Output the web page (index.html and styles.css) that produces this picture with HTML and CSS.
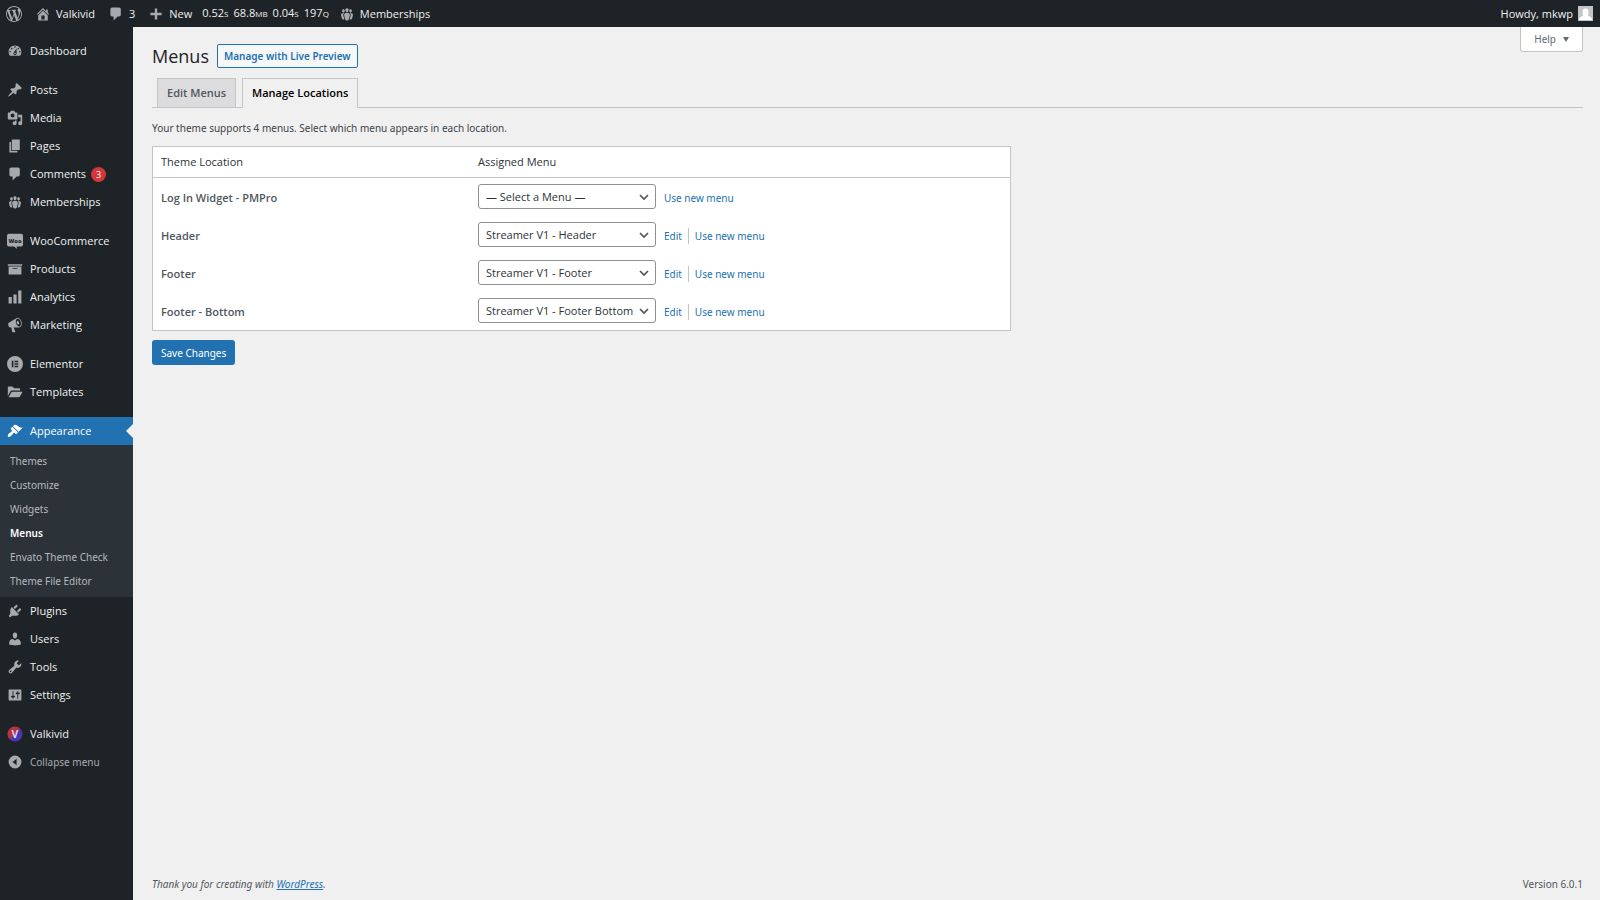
FILE: index.html
```html
<!DOCTYPE html>
<html lang="en">
<head>
  <meta charset="UTF-8">
  <title>Menus - Valkivid - WordPress</title>
  <link rel="stylesheet" href="styles.css">
</head>
<body>
  <!-- Icon sprite -->
  <svg class="sprite" xmlns="http://www.w3.org/2000/svg">
    <symbol id="i-wordpress" viewBox="0 0 20 20"><path d="M20 10c0-5.51-4.49-10-10-10C4.48 0 0 4.49 0 10c0 5.52 4.48 10 10 10 5.51 0 10-4.48 10-10zM7.78 15.37L4.37 6.22c.55-.02 1.17-.08 1.17-.08.5-.06.44-1.13-.06-1.11 0 0-1.45.11-2.37.11-.18 0-.37 0-.58-.01C4.12 2.69 6.87 1.11 10 1.11c2.33 0 4.45.87 6.05 2.34-.68-.11-1.65.39-1.65 1.58 0 .74.45 1.36.9 2.1.35.61.55 1.36.55 2.46 0 1.49-1.4 5-1.4 5l-3.03-8.37c.54-.02.82-.17.82-.17.5-.05.44-1.25-.06-1.22 0 0-1.44.12-2.38.12-.87 0-2.33-.12-2.33-.12-.5-.03-.56 1.2-.06 1.22l.92.08 1.26 3.41zM17.41 10c.24-.64.74-1.87.43-4.25.7 1.29 1.05 2.71 1.05 4.25 0 3.29-1.73 6.24-4.4 7.78.97-2.59 1.94-5.2 2.92-7.78zM6.1 18.09C3.12 16.65 1.11 13.53 1.11 10c0-1.3.23-2.48.72-3.59C3.25 10.3 4.67 14.2 6.1 18.09zm4.03-6.63l2.58 6.98c-.86.29-1.76.45-2.71.45-.79 0-1.57-.11-2.29-.33.81-2.38 1.62-4.74 2.42-7.1z"/></symbol>
    <symbol id="i-home" viewBox="0 0 20 20"><path d="M16 8.5l1.53 1.53-1.06 1.06L10 4.6l-6.47 6.49-1.06-1.06L10 2.5l4 4v-2h2v4zm-6-2.46l6 5.99V18H4v-5.97zM12 17v-5H8v5h4z"/></symbol>
    <symbol id="i-comments" viewBox="0 0 20 20"><path d="M5 2h9q.82 0 1.41.59T16 4v7q0 .82-.59 1.41T14 13h-2l-5 5v-5H5q-.82 0-1.41-.59T3 11V4q0-.82.59-1.41T5 2z"/></symbol>
    <symbol id="i-plus" viewBox="0 0 20 20"><path d="M17 8.500v3h-5.500V17h-3v-5.500H3v-3h5.500V3h3v5.500z"/></symbol>
    <symbol id="i-groups" viewBox="0 0 20 20"><path d="M8.03 4.46c-.29 1.28.55 3.46 1.97 3.46 1.41 0 2.25-2.18 1.96-3.46-.22-.98-1.08-1.63-1.96-1.63-.89 0-1.74.65-1.97 1.63zm-4.13.9c-.25 1.08.47 2.93 1.67 2.93s1.92-1.85 1.67-2.93c-.19-.83-.92-1.39-1.67-1.39s-1.48.56-1.67 1.39zm8.86 0c-.25 1.08.47 2.93 1.66 2.93 1.2 0 1.92-1.85 1.67-2.93-.19-.83-.92-1.39-1.67-1.39-.74 0-1.47.56-1.66 1.39zm-.59 11.43l1.25-4.3C14.2 10 12.71 8.47 10 8.47c-2.72 0-4.21 1.53-3.44 4.02l1.26 4.3C8.05 17.51 9 18 10 18c.98 0 1.94-.49 2.17-1.21zm-6.1-7.63c-.49.67-.96 1.83-.42 3.59l1.12 3.79c-.34.2-.77.31-1.2.31-.85 0-1.65-.41-1.85-1.03l-1.07-3.65c-.65-2.11.61-3.4 2.92-3.4.27 0 .54.02.79.06-.1.1-.2.22-.29.33zm8.35-.39c2.31 0 3.58 1.29 2.92 3.4l-1.07 3.65c-.2.62-1 1.03-1.85 1.03-.43 0-.86-.11-1.2-.31l1.11-3.77c.55-1.78.08-2.94-.42-3.61-.08-.11-.18-.23-.28-.33.25-.04.51-.06.79-.06z"/></symbol>
    <symbol id="i-dashboard" viewBox="0 0 20 20"><path d="M3.76 16h12.48c1.1-1.37 1.76-3.11 1.76-5 0-4.42-3.58-8-8-8s-8 3.58-8 8c0 1.89.66 3.63 1.76 5zM10 4c.55 0 1 .45 1 1s-.45 1-1 1-1-.45-1-1 .45-1 1-1zM6 6c.55 0 1 .45 1 1s-.45 1-1 1-1-.45-1-1 .45-1 1-1zm8 0c.55 0 1 .45 1 1s-.45 1-1 1-1-.45-1-1 .45-1 1-1zm-5.370 5.550L12 7v6c0 1.100-.9 2-2 2s-2-.9-2-2c0-.57.24-1.080.63-1.450zM4 10c.55 0 1 .45 1 1s-.45 1-1 1-1-.45-1-1 .45-1 1-1zm12 0c.55 0 1 .45 1 1s-.45 1-1 1-1-.45-1-1 .45-1 1-1zm-5 3c0-.55-.45-1-1-1s-1 .45-1 1 .45 1 1 1 1-.45 1-1z" fill-rule="evenodd"/></symbol>
    <symbol id="i-post" viewBox="0 0 20 20"><path d="M10.44 3.02l1.82-1.82 6.36 6.35-1.83 1.82c-1.05-.68-2.48-.57-3.41.36l-.75.75c-.92.93-1.04 2.35-.35 3.41l-1.83 1.82-2.41-2.41-2.8 2.79c-.42.42-3.38 2.71-3.8 2.29s1.86-3.39 2.28-3.81l2.79-2.79L4.1 9.36l1.83-1.82c1.05.69 2.48.57 3.4-.36l.75-.75c.93-.92 1.05-2.35.36-3.41z"/></symbol>
    <symbol id="i-media" viewBox="0 0 20 20"><path d="M13 11V4c0-.55-.45-1-1-1h-1.67L9 1H5L3.67 3H2c-.55 0-1 .45-1 1v7c0 .55.45 1 1 1h10c.55 0 1-.45 1-1zM7 4.500c1.380 0 2.500 1.120 2.500 2.500S8.380 9.500 7 9.500 4.500 8.380 4.500 7 5.620 4.500 7 4.500zM14 6h5v10.500c0 1.380-1.120 2.500-2.500 2.500S14 17.880 14 16.500s1.120-2.500 2.500-2.500c.17 0 .34.02.5.05V9h-3V6zm-4 8.050V13h2v3.500c0 1.380-1.120 2.500-2.500 2.500S7 17.880 7 16.500 8.120 14 9.500 14c.17 0 .34.02.5.05z" fill-rule="evenodd"/></symbol>
    <symbol id="i-page" viewBox="0 0 20 20"><path d="M6 15V2h10v13H6zm-1 1h8v2H3V5h2v11z"/></symbol>
    <symbol id="i-woo" viewBox="0 0 20 20"><path d="M2.500 1h15Q20 1 20 3.500v11q0 2.500-2.500 2.500H12l.5 3-3.500-3H2.500Q0 17 0 14.500v-11Q0 1 2.500 1z"/><text class="woo-text" x="10" y="12" text-anchor="middle">Woo</text></symbol>
    <symbol id="i-archive" viewBox="0 0 20 20"><path d="M19 4v2H1V4h18zM2 7h16v10H2V7zm11 3V9H7v1h6z" fill-rule="evenodd"/></symbol>
    <symbol id="i-chart" viewBox="0 0 20 20"><path d="M18 18V2h-4v16h4zm-6 0V7H8v11h4zm-6 0v-8H2v8h4z"/></symbol>
    <symbol id="i-megaphone" viewBox="0 0 20 20"><path fill-rule="evenodd" d="M18.15 5.94c.46 1.62.38 3.22-.02 4.48-.42 1.28-1.26 2.18-2.3 2.48-.16.06-.26.06-.4.06-.06.02-.12.02-.18.02-.06.02-.14.02-.22.02h-6.8l2.22 5.5c.02.14-.06.26-.14.34-.08.1-.24.16-.34.16H6.95c-.1 0-.26-.06-.34-.16-.08-.08-.16-.2-.14-.34l-1-5.5H4.25l-.02-.02c-.5.06-1.08-.18-1.54-.62s-.88-1.08-1.06-1.88c-.24-.8-.2-1.56-.02-2.2.18-.62.58-1.08 1.06-1.3l.02-.02 9-5.4c.1-.06.18-.1.24-.16.06-.04.14-.08.24-.12.16-.08.28-.12.5-.18 1.04-.3 2.24.1 3.22.98s1.84 2.24 2.26 3.86zm-2.58 5.98h-.02c.4-.1.74-.34 1.04-.7.58-.7.86-1.76.86-3.04 0-.64-.1-1.3-.28-1.98-.34-1.36-1.02-2.5-1.78-3.24s-1.68-1.1-2.46-.88c-.82.22-1.4.96-1.7 2-.32 1.04-.28 2.36.06 3.72.38 1.36 1 2.5 1.8 3.24.78.74 1.62 1.1 2.48.88zm-2.54-7.08c.22-.04.42-.02.62.04.38.16.76.48 1.02 1s.42 1.2.42 1.78c0 .3-.04.56-.12.8-.18.48-.44.84-.86.94-.34.1-.8-.06-1.14-.4s-.64-.86-.78-1.5c-.18-.62-.12-1.24.02-1.72s.48-.84.82-.94z"/></symbol>
    <symbol id="i-elementor" viewBox="0 0 20 20"><path d="M10 0a10 10 0 1 0 0 20 10 10 0 0 0 0-20zM6 6h2v8H6zm3.500 0H14v1.700H9.500zm0 3.150H14v1.700H9.500zm0 3.150H14V14H9.500z" fill-rule="evenodd"/></symbol>
    <symbol id="i-folder" viewBox="0 0 20 20"><path d="M1 15V4.500Q1 3 2.500 3h4L9 5.300h6q1.500 0 1.500 1.500v1.400H6.500Q5 8.200 4.200 9.500zm1 1.700l3.300-6.100q.5-1 1.600-1H19.500l-3.300 6.100q-.6 1-1.600 1z"/></symbol>
    <symbol id="i-appearance" viewBox="0 0 20 20"><path d="M14.48 11.06L7.41 3.99l1.5-1.5c.5-.56 2.3-.47 3.51.32 1.21.8 1.43 1.28 2.91 2.1 1.18.64 2.45 1.26 4.45.85zm-.71.71L6.7 4.7 4.93 6.47c-.39.39-.39 1.02 0 1.41l1.06 1.06c.39.39.39 1.03 0 1.42-.6.6-1.43 1.11-2.21 1.69-.35.26-.7.53-1.01.84C1.43 14.23.4 16.08 1.4 17.07c.99 1 2.84-.03 4.18-1.36.31-.31.58-.66.85-1.02.57-.78 1.08-1.61 1.69-2.21.39-.39 1.02-.39 1.41 0l1.06 1.06c.39.39 1.02.39 1.41 0z"/></symbol>
    <symbol id="i-plugins" viewBox="0 0 20 20"><path d="M13.11 4.36L9.87 7.6 8 5.73l3.24-3.24c.35-.34 1.05-.2 1.56.32.52.51.66 1.21.31 1.55zm-8 1.77l.91-1.12 9.01 9.01-1.19.84c-.71.71-2.63 1.16-3.82 1.16H6.14L4.9 17.26c-.59.59-1.54.59-2.12 0-.59-.58-.59-1.53 0-2.12l1.24-1.24v-3.88c0-1.13.4-3.19 1.09-3.89zm7.26 3.97l3.24-3.24c.34-.35 1.04-.21 1.55.31.52.51.66 1.21.31 1.55l-3.24 3.25z"/></symbol>
    <symbol id="i-users" viewBox="0 0 20 20"><path d="M10 9.25c-2.27 0-2.73-3.44-2.73-3.44C7 4.02 7.82 2 9.97 2c2.16 0 2.98 2.02 2.71 3.81 0 0-.41 3.44-2.68 3.44zm0 2.57L12.72 10c2.39 0 4.52 2.33 4.52 4.53v2.49s-3.65 1.13-7.24 1.13c-3.65 0-7.24-1.13-7.24-1.13v-2.49c0-2.25 1.94-4.48 4.47-4.48z"/></symbol>
    <symbol id="i-tools" viewBox="0 0 20 20"><path d="M16.68 9.77c-1.34 1.34-3.3 1.67-4.95.99l-5.41 6.52c-.99.99-2.59.99-3.58 0s-.99-2.59 0-3.57l6.52-5.42c-.68-1.65-.35-3.61.99-4.95 1.28-1.28 3.12-1.62 4.72-1.06l-2.89 2.89 2.82 2.82 2.86-2.87c.53 1.58.18 3.39-1.08 4.65zM3.81 16.21c.4.39 1.04.39 1.43 0 .4-.4.4-1.04 0-1.43-.39-.4-1.03-.4-1.43 0-.39.39-.39 1.03 0 1.43z"/></symbol>
    <symbol id="i-settings" viewBox="0 0 20 20"><path d="M18 16V4c0-.55-.45-1-1-1H3c-.55 0-1 .45-1 1v12c0 .55.45 1 1 1h14c.55 0 1-.45 1-1zM8 11h1c.55 0 1 .45 1 1s-.45 1-1 1H8v1.5c0 .28-.22.5-.5.5s-.5-.22-.5-.5V13H6c-.55 0-1-.45-1-1s.45-1 1-1h1V5.5c0-.28.22-.5.5-.5s.5.22.5.5V11zm5-2h-1c-.55 0-1-.45-1-1s.45-1 1-1h1V5.5c0-.28.22-.5.5-.5s.5.22.5.5V7h1c.55 0 1 .45 1 1s-.45 1-1 1h-1v5.5c0 .28-.22.5-.5.5s-.5-.22-.5-.5V9z"/></symbol>
    <symbol id="i-collapse" viewBox="0 0 20 20"><path d="M10 2a8 8 0 1 0 0 16 8 8 0 0 0 0-16zm2 12l-5-4 5-4z" fill-rule="evenodd"/></symbol>
  </svg>

  <header class="adminbar">
    <a class="bar-item" href="#" aria-label="About WordPress"><svg class="icon"><use href="#i-wordpress"/></svg></a>
    <a class="bar-item" href="#"><svg class="icon"><use href="#i-home"/></svg>Valkivid</a>
    <a class="bar-item" href="#"><svg class="icon"><use href="#i-comments"/></svg>3</a>
    <a class="bar-item" href="#"><svg class="icon"><use href="#i-plus"/></svg>New</a>
    <a class="bar-item bar-stats" href="#">
      <span>0.52<small>S</small></span>
      <span>68.8<small>MB</small></span>
      <span>0.04<small>S</small></span>
      <span>197<small>Q</small></span>
    </a>
    <a class="bar-item" href="#"><svg class="icon"><use href="#i-groups"/></svg>Memberships</a>
    <a class="bar-item bar-account" href="#">Howdy, mkwp
      <svg class="avatar" viewBox="0 0 15 15"><path fill="#c3c4c7" d="M0 0h15v15H0z"/><path fill="#fff" d="M1 14q0-3 4-4.200Q4.500 8 4.500 5.500 4.500 2.500 7.500 2.500t3 3Q10.500 8 10 9.800q4 1.200 4 4.200z"/></svg>
    </a>
  </header>

  <div class="wrap">
    <nav class="sidebar">
      <ul class="menu">
        <li><a href="#"><svg class="icon"><use href="#i-dashboard"/></svg>Dashboard</a></li>
        <li class="group"><a href="#"><svg class="icon"><use href="#i-post"/></svg>Posts</a></li>
        <li><a href="#"><svg class="icon"><use href="#i-media"/></svg>Media</a></li>
        <li><a href="#"><svg class="icon"><use href="#i-page"/></svg>Pages</a></li>
        <li><a href="#"><svg class="icon"><use href="#i-comments"/></svg>Comments <span class="count">3</span></a></li>
        <li><a href="#"><svg class="icon"><use href="#i-groups"/></svg>Memberships</a></li>
        <li class="group"><a href="#"><svg class="icon"><use href="#i-woo"/></svg>WooCommerce</a></li>
        <li><a href="#"><svg class="icon"><use href="#i-archive"/></svg>Products</a></li>
        <li><a href="#"><svg class="icon"><use href="#i-chart"/></svg>Analytics</a></li>
        <li><a href="#"><svg class="icon"><use href="#i-megaphone"/></svg>Marketing</a></li>
        <li class="group"><a href="#"><svg class="icon"><use href="#i-elementor"/></svg>Elementor</a></li>
        <li><a href="#"><svg class="icon"><use href="#i-folder"/></svg>Templates</a></li>
        <li class="group">
          <a class="current" href="#"><svg class="icon"><use href="#i-appearance"/></svg>Appearance</a>
          <ul class="submenu">
            <li><a href="#">Themes</a></li>
            <li><a href="#">Customize</a></li>
            <li><a href="#">Widgets</a></li>
            <li><a class="active" href="#">Menus</a></li>
            <li><a href="#">Envato Theme Check</a></li>
            <li><a href="#">Theme File Editor</a></li>
          </ul>
        </li>
        <li><a href="#"><svg class="icon"><use href="#i-plugins"/></svg>Plugins</a></li>
        <li><a href="#"><svg class="icon"><use href="#i-users"/></svg>Users</a></li>
        <li><a href="#"><svg class="icon"><use href="#i-tools"/></svg>Tools</a></li>
        <li><a href="#"><svg class="icon"><use href="#i-settings"/></svg>Settings</a></li>
        <li class="group"><a href="#">
          <svg class="icon" viewBox="0 0 20 20">
            <defs><linearGradient id="v-grad" x1="0" y1="0" x2="1" y2="1"><stop offset=".45" stop-color="#b8323f"/><stop offset=".55" stop-color="#4a35b0"/></linearGradient></defs>
            <circle cx="10" cy="10" r="9.500" fill="url(#v-grad)"/>
            <text class="v-text" x="10" y="15" text-anchor="middle">V</text>
          </svg>Valkivid</a></li>
        <li><button class="collapse" type="button"><svg class="icon"><use href="#i-collapse"/></svg>Collapse menu</button></li>
      </ul>
    </nav>

    <div class="content">
      <main>
        <div class="title-row">
          <h1>Menus</h1>
          <a class="title-action" href="#">Manage with Live Preview</a>
          <button class="help" type="button">Help <span class="arrow"></span></button>
        </div>

        <nav class="tabs">
          <a class="tab" href="#">Edit Menus</a>
          <a class="tab tab-active" href="#">Manage Locations</a>
        </nav>

        <p class="intro">Your theme supports 4 menus. Select which menu appears in each location.</p>

        <form>
          <table class="locations">
            <thead>
              <tr><th scope="col" class="col-location">Theme Location</th><th scope="col">Assigned Menu</th></tr>
            </thead>
            <tbody>
              <tr>
                <td><label for="loc-login">Log In Widget - PMPro</label></td>
                <td><div class="assign">
                  <select id="loc-login"><option>— Select a Menu —</option></select>
                  <span class="links"><a href="#">Use new menu</a></span>
                </div></td>
              </tr>
              <tr>
                <td><label for="loc-header">Header</label></td>
                <td><div class="assign">
                  <select id="loc-header"><option>Streamer V1 - Header</option></select>
                  <span class="links"><a href="#">Edit</a><a href="#">Use new menu</a></span>
                </div></td>
              </tr>
              <tr>
                <td><label for="loc-footer">Footer</label></td>
                <td><div class="assign">
                  <select id="loc-footer"><option>Streamer V1 - Footer</option></select>
                  <span class="links"><a href="#">Edit</a><a href="#">Use new menu</a></span>
                </div></td>
              </tr>
              <tr>
                <td><label for="loc-bottom">Footer - Bottom</label></td>
                <td><div class="assign">
                  <select id="loc-bottom"><option>Streamer V1 - Footer Bottom</option></select>
                  <span class="links"><a href="#">Edit</a><a href="#">Use new menu</a></span>
                </div></td>
              </tr>
            </tbody>
          </table>
          <button class="save" type="submit">Save Changes</button>
        </form>
      </main>

      <footer class="footer">
        <em>Thank you for creating with <a href="#">WordPress</a>.</em>
        <span>Version 6.0.1</span>
      </footer>
    </div>
  </div>
</body>
</html>
```
FILE: styles.css
```css
* {
  box-sizing: border-box;
}

body {
  margin: 0;
  min-height: 100vh;
  display: flex;
  flex-direction: column;
  background: #f0f0f1;
  color: #3c434a;
  font-family: "Open Sans", "Noto Sans", sans-serif;
  font-size: 11px;
  line-height: 16px;
}

a {
  color: #2271b1;
  text-decoration: none;
}

button,
select {
  font-family: inherit;
  font-size: 11px;
  cursor: pointer;
}

/* Small text */
.submenu,
.collapse,
.title-action,
.help,
.intro,
.links,
.save,
.footer {
  font-family: "Noto Sans", "Open Sans", sans-serif;
  font-size: 10px;
}

ul {
  list-style: none;
  margin: 0;
  padding: 0;
}

.sprite {
  display: none;
}

.icon {
  width: 16px;
  height: 16px;
  flex: none;
  fill: #a7aaad;
}

.woo-text {
  font-size: 7px;
  font-weight: 800;
  fill: #1d2327;
}

.v-text {
  font-size: 13px;
  font-weight: 700;
  fill: #d5d3e8;
}

/* Admin bar */
.adminbar {
  height: 27px;
  display: flex;
  align-items: center;
  gap: 13px;
  padding: 0 7px 0 6px;
  background: #1d2327;
}

.bar-item {
  display: flex;
  align-items: center;
  gap: 5px;
  color: #f0f0f1;
}

.bar-stats {
  gap: 5px;
  margin: 0 -3px;
}

.bar-stats small {
  font-size: 8px;
}

.bar-account {
  margin-left: auto;
}

.avatar {
  width: 15px;
  height: 15px;
}

/* Sidebar */
.wrap {
  flex: 1;
  display: flex;
}

.sidebar {
  width: 133px;
  flex: none;
  padding-top: 10px;
  background: #1d2327;
}

.menu > li > a,
.collapse {
  position: relative;
  height: 28px;
  display: flex;
  align-items: center;
  gap: 7px;
  padding-left: 7px;
  color: #f0f0f1;
}

.menu > .group {
  margin-top: 11px;
}

.menu > li > .current {
  background: #2271b1;
  color: #fff;
}

.current .icon {
  fill: #fff;
}

.current::after {
  content: "";
  position: absolute;
  right: 0;
  border: 7px solid transparent;
  border-right-color: #f0f0f1;
  border-left-width: 0;
}

.count {
  width: 15px;
  height: 15px;
  margin-left: -2px;
  border-radius: 50%;
  background: #d63638;
  color: #fff;
  font-size: 9px;
  line-height: 15px;
  text-align: center;
}

.submenu {
  padding: 4px 0;
  background: #2c3338;
}

.submenu a {
  display: block;
  padding-left: 10px;
  color: #b4b9be;
  line-height: 24px;
}

.submenu .active {
  color: #fff;
  font-weight: 600;
}

.menu .collapse {
  border: 0;
  background: none;
  color: #a7aaad;
}

/* Page */
.content {
  flex: 1;
  display: flex;
  flex-direction: column;
  justify-content: space-between;
  padding: 0 17px 8px 19px;
}

.title-row {
  display: flex;
  align-items: center;
  gap: 8px;
  height: 51px;
  padding-top: 6px;
}

h1 {
  margin: 0;
  color: #1d2327;
  font-size: 18px;
  font-weight: 400;
  line-height: 24px;
}

.title-action {
  padding: 3px 6px;
  border: 1px solid #2271b1;
  border-radius: 2px;
  background: #f6f7f7;
  font-weight: 600;
}

.help {
  align-self: flex-start;
  display: flex;
  align-items: center;
  gap: 7px;
  height: 25px;
  margin: -6px 0 0 auto;
  padding: 0 13px;
  border: 1px solid #c3c4c7;
  border-top: 0;
  border-radius: 0 0 3px 3px;
  background: #fff;
  color: #646970;
}

.arrow {
  border: 3px solid transparent;
  border-top: 5px solid #646970;
  border-bottom: 0;
}

.tabs {
  display: flex;
  gap: 6px;
  padding-left: 5px;
  border-bottom: 1px solid #c3c4c7;
}

.tab {
  padding: 6px 9px;
  border: 1px solid #c3c4c7;
  border-bottom: 0;
  background: #dcdcde;
  color: #50575e;
  font-weight: 600;
}

.tab-active {
  margin-bottom: -1px;
  padding-bottom: 7px;
  background: #f0f0f1;
  color: #000;
}

.intro {
  margin: 12px 0 10px;
}

.locations {
  width: 60%;
  border: 1px solid #c3c4c7;
  border-spacing: 0;
  background: #fff;
  table-layout: fixed;
}

.locations th {
  padding: 7px 8px;
  border-bottom: 1px solid #c3c4c7;
  color: #2c3338;
  font-weight: 400;
  text-align: left;
}

.col-location {
  width: 37%;
}

.locations td {
  padding: 6px 8px 4px;
  vertical-align: top;
}

.locations label {
  display: block;
  font-weight: 600;
  color: #50575e;
  line-height: 28px;
}

.assign {
  display: flex;
  align-items: flex-start;
  gap: 8px;
}

.assign select {
  width: 178px;
  height: 25px;
  padding: 0 20px 0 7px;
  border: 1px solid #8c8f94;
  border-radius: 3px;
  background: #fff url("data:image/svg+xml,%3Csvg xmlns='http://www.w3.org/2000/svg' viewBox='0 0 12 12'%3E%3Cpath d='M2 4l4 4 4-4' fill='none' stroke='%23555' stroke-width='1.700'/%3E%3C/svg%3E") no-repeat right 5px center / 12px 12px;
  color: #2c3338;
  appearance: none;
}

.links {
  display: flex;
  align-items: center;
  height: 28px;
}

.links a + a {
  margin-left: 6px;
  padding-left: 6px;
  border-left: 1px solid #c3c4c7;
}

.save {
  height: 25px;
  margin-top: 9px;
  padding: 0 9px;
  border: 0;
  border-radius: 3px;
  background: #2271b1;
  color: #fff;
}

.footer {
  display: flex;
  justify-content: space-between;
  color: #50575e;
}

.footer a {
  text-decoration: underline;
}
```
